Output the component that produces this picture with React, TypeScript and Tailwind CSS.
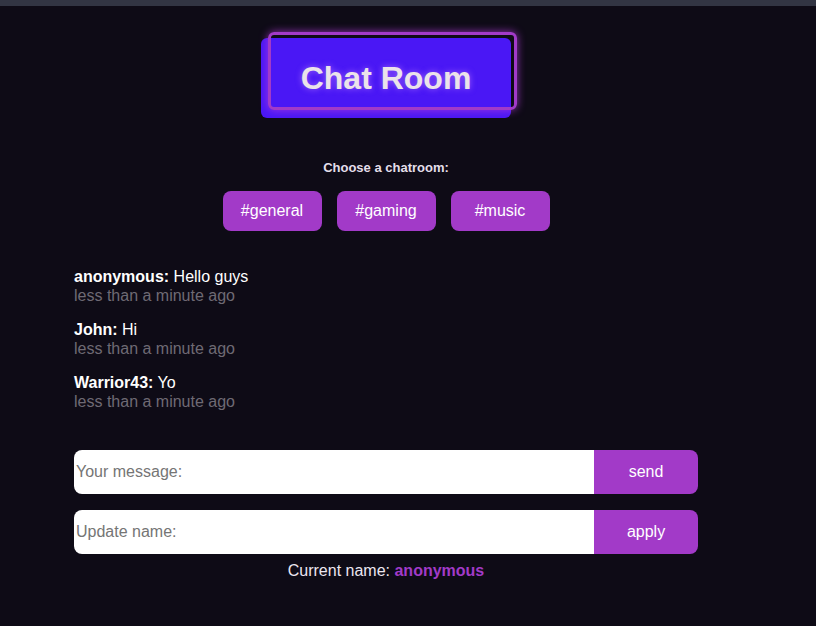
const rooms = ['#general', '#gaming', '#music'];

const messages = [
  { user: 'anonymous', text: 'Hello guys' },
  { user: 'John', text: 'Hi' },
  { user: 'Warrior43', text: 'Yo' },
];

function InputRow({ placeholder, action }: { placeholder: string; action: string }) {
  return (
    <div className="flex h-[44px] w-full">
      <input
        placeholder={placeholder}
        className="h-full flex-1 rounded-l-lg bg-white px-[2px] text-[16px] text-black outline-none placeholder:text-[#757575]"
      />
      <button className="h-full w-[104px] rounded-r-lg bg-[#a23ac8] text-[16px] text-white">{action}</button>
    </div>
  );
}

export default function App() {
  return (
    <div className="min-h-[626px] bg-[#0e0b16] font-['Liberation_Sans',Arial,sans-serif] text-[#ece6f0]">
      <div className="h-[6px] bg-[#323543]" />
      <div className="ml-[74px] w-[624px] pb-10">
        <div className="mt-[32px] flex justify-center">
          <div className="relative">
            <h1 className="flex h-[80px] w-[250px] items-center justify-center rounded-md bg-[#4a17f5] text-[32px] font-bold text-[#ebe3ea] [text-shadow:0_0_6px_rgba(210,150,255,0.6)]">
              Chat Room
            </h1>
            <div className="pointer-events-none absolute left-[7px] top-[-6px] h-[78px] w-[249px] rounded-md border-[3px] border-[#a23ac8] shadow-[0_0_8px_rgba(180,60,220,0.8)]" />
          </div>
        </div>

        <p className="mt-[42px] text-center text-[13px] font-bold leading-[16px] text-[#e4dfea]">Choose a chatroom:</p>
        <div className="mt-[15px] flex justify-center gap-[15px]">
          {rooms.map((r) => (
            <button key={r} className="h-[40px] w-[99px] rounded-lg bg-[#a23ac8] text-[16px] text-white">
              {r}
            </button>
          ))}
        </div>

        <div className="mt-[36px] flex flex-col gap-[15px]">
          {messages.map((m) => (
            <div key={m.user} className="text-[16px] leading-[19px]">
              <div className="text-white">
                <span className="font-bold">{m.user}:</span> {m.text}
              </div>
              <div className="text-[#6e6a74]">less than a minute ago</div>
            </div>
          ))}
        </div>

        <div className="mt-[39px] flex flex-col gap-[16px]">
          <InputRow placeholder="Your message:" action="send" />
          <InputRow placeholder="Update name:" action="apply" />
        </div>
        <p className="mt-[7px] text-center text-[16px] leading-[19px] text-[#ece6f0]">
          Current name: <span className="font-bold text-[#a23ac8]">anonymous</span>
        </p>
      </div>
    </div>
  );
}
